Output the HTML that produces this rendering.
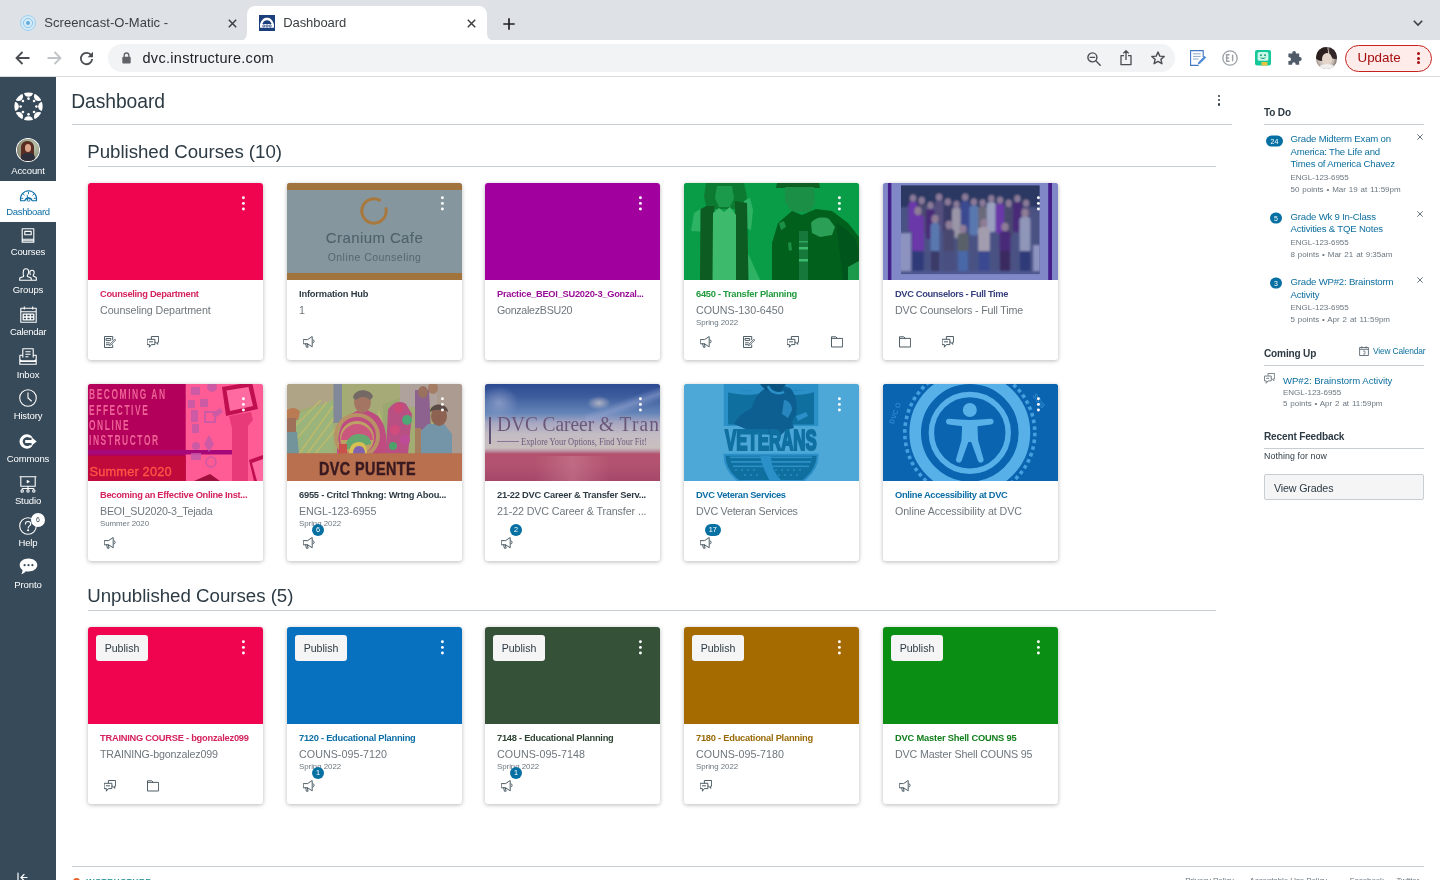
<!DOCTYPE html>
<html lang="en">
<head>
<meta charset="utf-8">
<title>Dashboard</title>
<style>
*{box-sizing:border-box;margin:0;padding:0}
html,body{width:1440px;height:880px;overflow:hidden;background:#fff;font-family:"Liberation Sans",sans-serif;color:#2d3b45}
.abs{position:absolute}
svg{display:block;overflow:visible}
#tabbar{position:absolute;left:0;top:0;width:1440px;height:40px;background:#dee1e6}
#toolbar{position:absolute;left:0;top:40px;width:1440px;height:37px;background:#fff;border-bottom:1px solid #dadce0}

.tabtxt{position:absolute;top:14.800px;font-size:13px;color:#3c4043;white-space:nowrap}
#tt1{letter-spacing:.055px}#tt2{letter-spacing:-.07px}
#omni{position:absolute;left:108px;top:44px;width:1067px;height:28px;border-radius:14px;background:#f1f3f4}
#url{position:absolute;left:142.500px;top:50px;font-size:14.500px;color:#202124;white-space:nowrap;letter-spacing:.3px}
#side{position:absolute;left:0;top:77px;width:56px;height:803px;background:#374a59}
.nav{position:absolute;left:0;width:56px;text-align:center;font-size:9.500px;color:#fff;white-space:nowrap;letter-spacing:-.12px}
#nav-active{position:absolute;left:0;top:181px;width:56px;height:41px;background:#fff}
h1.t{position:absolute;left:71.200px;top:90.700px;font-size:19.300px;letter-spacing:-.06px;font-weight:400;color:#2d3b45;white-space:nowrap}
.hr{position:absolute;height:1px;background:#c7cdd1}
h2.s{position:absolute;left:87.200px;letter-spacing:-.02px;font-size:18.700px;font-weight:400;color:#2d3b45;white-space:nowrap}
.card{position:absolute;width:175px;height:177px;background:#fff;border-radius:3px;box-shadow:0 1px 4px rgba(0,0,0,.28);overflow:hidden}
.hero{position:absolute;left:0;top:0;width:175px;height:97px;overflow:hidden}
.ct{position:absolute;left:12px;top:106px;width:152px;font-size:9.300px;letter-spacing:-.3px;font-weight:700;white-space:nowrap;overflow:hidden;text-overflow:ellipsis}
.cs{position:absolute;left:12px;top:121px;width:152px;font-size:10.700px;letter-spacing:-.08px;color:#6f777d;white-space:nowrap;overflow:hidden;text-overflow:ellipsis}
.cterm{position:absolute;left:12px;top:134.600px;font-size:7.900px;letter-spacing:-.1px;color:#6b7780;white-space:nowrap}
.kebab{position:absolute;left:153px;top:14px;width:4px;height:14px}
.kebab i{display:block;width:2.800px;height:2.800px;border-radius:50%;background:#fff;margin:0 0 2.800px .3px}
.pub{position:absolute;left:8px;top:8px;width:52px;height:26px;background:#f5f5f5;border-radius:3px;font-size:10.6px;color:#2d3b45;text-align:center;line-height:26px}
.ic{position:absolute;top:153px;width:12px;height:12px;color:#46555f}
.ic svg{width:12px;height:12px;fill:none;stroke:currentColor;stroke-width:.95;stroke-linejoin:round;stroke-linecap:round}
.badge{position:absolute;height:12.200px;min-width:11px;border-radius:6.100px;background:#0770a3;color:#fff;font-size:7.300px;line-height:12.200px;text-align:center;padding:0 2.5px}
#wrap{position:absolute;left:0;top:0;width:1440px;height:880px;will-change:transform}
</style>
</head>
<body>
<div id="wrap">
<svg width="0" height="0" style="position:absolute">
<defs>
<symbol id="i-ann" viewBox="0 0 12 12"><path d="M.6 3.600h4l4.600-3.100v10.300L4.600 7.800h-4zM10.100 3.700c1.500.2 1.500 3.100 0 3.300M2.700 7.900l.7 3.300h1.700l-.7-3.300"/></symbol>
<symbol id="i-asg" viewBox="0 0 12 12"><path d="M8.700 3.800V.5H.5v11h8.200V9M2.400 2.500h4.400v1.900H2.400zM2.400 6.800h3M2.400 8.700h2.400"/><path d="M11.500 4.300l-4.700 4.800-1.300.5.400-1.400 4.700-4.700z" stroke-width=".8"/></symbol>
<symbol id="i-dis" viewBox="0 0 12 12"><path d="M4.400 3V.5h7.200v5.600h-.9v2.300L8.700 6.100H8M.5 3.300h7.400v5.300H4.300l-1.900 2.600V8.600H.5zM2.400 5.800h3.200"/></symbol>
<symbol id="i-fol" viewBox="0 0 12 12"><path d="M.5 10.600V.8h4.300l1.600 1.600h5.200v8.200zM.5 2.400h5.900"/></symbol>
</defs>
</svg>
<div id="tabbar"></div>
<svg class="abs" style="left:239px;top:5.500px" width="257" height="35" viewBox="0 0 257 35"><path d="M0 35c5 0 8-3 8-8V9c0-5 3-9 8-9h224c5 0 8 4 8 9v18c0 5 3 8 9 8z" fill="#fff"/></svg>
<svg class="abs" style="left:20px;top:15px" width="16" height="16" viewBox="0 0 16 16"><circle cx="8" cy="8" r="7.500" fill="#d3eaf8" stroke="#9fd0ee" stroke-width="1"/><circle cx="8" cy="8" r="4.600" fill="none" stroke="#8cc5e8" stroke-width="1"/><circle cx="8" cy="8" r="1.900" fill="#5ea9d6"/></svg>
<div class="tabtxt" id="tt1" style="left:44.300px">Screencast-O-Matic -</div>
<svg class="abs" style="left:228px;top:19px" width="9" height="9" viewBox="0 0 9 9" fill="none" stroke="#3c4043" stroke-width="1.500"><path d="M.8.8l7.400 7.400M8.200.8L.8 8.200"/></svg>
<svg class="abs" style="left:259px;top:15px" width="16" height="16" viewBox="0 0 16 16"><rect width="16" height="16" fill="#1b3e7c"/><path d="M1 9.500C2.500 4.500 5 2.800 8 2.800s5.500 1.700 7 6.700H12.800C12 6.800 10.200 5.300 8 5.300S4 6.800 3.200 9.500z" fill="#fff"/><rect x="1" y="9" width="14" height="3.800" rx=".5" fill="#fff"/><g fill="none" stroke="#1b3e7c" stroke-width=".8"><circle cx="4.800" cy="10.900" r="1.100"/><circle cx="8" cy="10.900" r="1.100"/><circle cx="11.200" cy="10.900" r="1.100"/></g></svg>
<div class="tabtxt" id="tt2" style="left:283.200px">Dashboard</div>
<svg class="abs" style="left:466.500px;top:19px" width="9" height="9" viewBox="0 0 9 9" fill="none" stroke="#3c4043" stroke-width="1.500"><path d="M.8.8l7.400 7.400M8.200.8L.8 8.200"/></svg>
<svg class="abs" style="left:503px;top:17.500px" width="12" height="12" viewBox="0 0 12 12" fill="none" stroke="#202124" stroke-width="1.700"><path d="M6 .3v11.400M.3 6h11.400"/></svg>
<svg class="abs" style="left:1413px;top:19.500px" width="10" height="6" viewBox="0 0 10 6" fill="none" stroke="#3c4043" stroke-width="1.600"><path d="M.8.8L5 5 9.200.8"/></svg>
<div id="toolbar"></div>
<svg class="abs" style="left:14.500px;top:51px" width="15" height="14" viewBox="0 0 15 14" fill="none" stroke="#4a4d51" stroke-width="1.800"><path d="M14.500 7H2M7.500 1L1.500 7l6 6"/></svg>
<svg class="abs" style="left:46.500px;top:51px" width="15" height="14" viewBox="0 0 15 14" fill="none" stroke="#c0c3c7" stroke-width="1.800"><path d="M.5 7H13M7.500 1l6 6-6 6"/></svg>
<svg class="abs" style="left:79px;top:50.500px" width="15" height="15" viewBox="0 0 15 15"><path d="M12.300 4.400A5.700 5.700 0 1 0 13.200 8" fill="none" stroke="#4a4d51" stroke-width="1.800"/><path d="M14 .8v5.400H8.600z" fill="#4a4d51"/></svg>
<div id="omni"></div>
<svg class="abs" style="left:121.500px;top:52px" width="9" height="12" viewBox="0 0 9 12"><path d="M2.200 5V3.300a2.300 2.300 0 0 1 4.600 0V5" fill="none" stroke="#5f6368" stroke-width="1.300"/><rect x=".3" y="4.800" width="8.400" height="6.600" rx="1" fill="#5f6368"/></svg>
<div id="url">dvc.instructure.com</div>
<svg class="abs" style="left:1087px;top:51.500px" width="14" height="14" viewBox="0 0 14 14" fill="none" stroke="#4a4d51" stroke-width="1.400"><circle cx="5.400" cy="5.400" r="4.500"/><path d="M8.800 8.800l4.400 4.400M3.200 5.400h4.400" stroke-linecap="round"/></svg>
<svg class="abs" style="left:1120px;top:50px" width="12" height="16" viewBox="0 0 12 16" fill="none" stroke="#4a4d51" stroke-width="1.300" stroke-linejoin="round"><path d="M4 5.700H1v9h10v-9H8M6 10V1M3.300 3.400L6 .8l2.700 2.600"/></svg>
<svg class="abs" style="left:1151px;top:51px" width="14" height="14" viewBox="0 0 14 14" fill="none" stroke="#4a4d51" stroke-width="1.400" stroke-linejoin="round"><path d="M7 1l1.800 4.100 4.400.4-3.300 2.900 1 4.300L7 10.400l-3.900 2.300 1-4.300L.8 5.500l4.400-.4z"/></svg>
<svg class="abs" style="left:1190px;top:50px" width="17" height="16" viewBox="0 0 17 16" fill="none" stroke="#3f78c7" stroke-width="1.100"><path d="M13.200 7V.6H.6v14.800h8"/><path d="M3 3.800h7.600M3 6.400h7.600M3 9h5.500" stroke="#7f9cc0" stroke-width=".9"/><path d="M15.800 7.500l-5.600 5.600-2 .8.800-2 5.600-5.600z" fill="#4d8de0" stroke="#3f78c7" stroke-width=".8"/></svg>
<svg class="abs" style="left:1222px;top:50px" width="16" height="16" viewBox="0 0 16 16" fill="none" stroke="#9aa0a6" stroke-width="1.300"><circle cx="8" cy="8" r="7.200"/><path d="M7.600 4.800H4.600v6.400h3M4.600 8h2.400M10.600 4.800v6.400" stroke-width="1.400"/></svg>
<svg class="abs" style="left:1254.500px;top:50px" width="16" height="16" viewBox="0 0 16 16"><rect width="16" height="15.500" rx="2" fill="#16c79a"/><rect x="2.600" y="2" width="10.800" height="8.800" rx="1.600" fill="#c9f7e8"/><circle cx="6" cy="5.200" r=".9" fill="#0e8f6e"/><circle cx="10" cy="5.200" r=".9" fill="#0e8f6e"/><path d="M5.600 7.400c.8 1.400 4 1.400 4.800 0" fill="none" stroke="#0e8f6e" stroke-width="1"/><rect x="6.500" y="12" width="6" height="3.500" fill="#e8c23a"/></svg>
<svg class="abs" style="left:1286px;top:50px" width="16" height="16" viewBox="0 0 16 16"><path d="M6.300 2.800a1.800 1.800 0 0 1 3.600 0v.8h3.300v3.500h.6a1.900 1.900 0 0 1 0 3.800h-.6v3.800H9.600v-.7a1.700 1.700 0 0 0-3.400 0v.7H2.400v-3.600h.7a1.900 1.900 0 0 0 0-3.800h-.7V3.600h3.900z" fill="#4f5b69"/></svg>
<div class="abs" style="left:1315.500px;top:47px;width:21.500px;height:21.500px;border-radius:50%;overflow:hidden;background:#d8d2cc">
 <div class="abs" style="left:0;top:0;width:22px;height:22px;background:radial-gradient(circle at 45% 55%,#e9e0d8 0,#c9beb5 45%,#3a2d2a 80%)"></div>
 <div class="abs" style="left:-2px;top:-3px;width:14px;height:17px;border-radius:50%;background:#2b201e"></div>
 <div class="abs" style="left:13px;top:-4px;width:12px;height:16px;border-radius:50%;background:#33272a"></div>
 <div class="abs" style="left:6px;top:6px;width:10px;height:12px;border-radius:50%;background:#e5d6cb"></div>
 <div class="abs" style="left:3px;top:17px;width:16px;height:7px;border-radius:50% 50% 0 0;background:#f1efee"></div>
</div>
<div class="abs" style="left:1344.500px;top:44.500px;width:87.500px;height:27px;border-radius:13.500px;background:#fdecea;border:1px solid #c5221f"></div>
<div class="abs" id="upd" style="left:1357.500px;top:49.500px;font-size:13.400px;color:#a50e0e;white-space:nowrap">Update</div>
<div class="abs" style="left:1416.800px;top:52.300px;width:3px"><i style="display:block;width:3px;height:3px;border-radius:50%;background:#a50e0e;margin-bottom:1.600px"></i><i style="display:block;width:3px;height:3px;border-radius:50%;background:#a50e0e;margin-bottom:1.600px"></i><i style="display:block;width:3px;height:3px;border-radius:50%;background:#a50e0e"></i></div>
<div id="side"></div>
<div id="nav-active"></div>
<svg class="abs" style="left:13.500px;top:91.700px" width="29" height="29" viewBox="0 0 28 28"><defs><clipPath id="lc"><circle cx="14" cy="14" r="13.6"/></clipPath></defs><g clip-path="url(#lc)" fill="#fff"><circle cx="14.00" cy="0.20" r="4.500"/><circle cx="14.00" cy="6.40" r="1.250"/><circle cx="23.76" cy="4.24" r="4.500"/><circle cx="19.37" cy="8.63" r="1.250"/><circle cx="27.80" cy="14.00" r="4.500"/><circle cx="21.60" cy="14.00" r="1.250"/><circle cx="23.76" cy="23.76" r="4.500"/><circle cx="19.37" cy="19.37" r="1.250"/><circle cx="14.00" cy="27.80" r="4.500"/><circle cx="14.00" cy="21.60" r="1.250"/><circle cx="4.24" cy="23.76" r="4.500"/><circle cx="8.63" cy="19.37" r="1.250"/><circle cx="0.20" cy="14.00" r="4.500"/><circle cx="6.40" cy="14.00" r="1.250"/><circle cx="4.24" cy="4.24" r="4.500"/><circle cx="8.63" cy="8.63" r="1.250"/></g></svg>
<div class="abs" style="left:16px;top:138px;width:24px;height:24px;border-radius:50%;background:#fff"></div>
<div class="abs" style="left:17px;top:139px;width:22px;height:22px;border-radius:50%;overflow:hidden;background:#8f8a80">
 <div class="abs" style="left:0;top:0;width:22px;height:22px;background:radial-gradient(circle at 70% 30%,#b9c7b0 0,#9fa890 40%,#7d7466 100%)"></div>
 <div class="abs" style="left:4px;top:2px;width:13px;height:22px;border-radius:6px 6px 2px 2px;background:#5a2d22"></div>
 <div class="abs" style="left:7.5px;top:4.5px;width:6.5px;height:8px;border-radius:50%;background:#d9a58c"></div>
 <div class="abs" style="left:4px;top:14px;width:14px;height:9px;border-radius:5px 5px 0 0;background:#2c2f3a"></div>
</div>
<div class="nav" style="top:165px">Account</div>
<svg class="abs" style="left:18.5px;top:190px" width="19" height="12" viewBox="0 0 19 12" fill="none" stroke="#0b6ea6" stroke-width="1.1" stroke-linecap="round" stroke-linejoin="round"><path d="M1.6 10.8A8.3 8.3 0 0 1 9.5 .8a8.3 8.3 0 0 1 7.900 10H13.200a3.800 3.800 0 0 0-7.400 0z"/><path d="M9.500 2.300v1.500M4.300 4.200l1 1M14.700 4.200l-1 1M2.600 8.300h1.300M16.400 8.300h-1.300M8.200 5.200l.6 4.200M8 9.800a1.500 1.500 0 1 0 3 0 1.500 1.500 0 0 0-3 0" stroke-width=".9"/></svg>
<div class="nav" style="top:206px;color:#0b6ea6;letter-spacing:-.35px">Dashboard</div>
<svg class="abs" style="left:21px;top:227.500px" width="14" height="15" viewBox="0 0 14 15" fill="none" stroke="#fff" stroke-width="1.1" stroke-linejoin="round"><path d="M1.200 .7h11.600v10.600H1.200zM1.200 11.300v3h11.600v-3M1.200 12.800h11.600M3.800 3.400h6.400v3.400H3.800z"/></svg>
<div class="nav" style="top:246px">Courses</div>
<svg class="abs" style="left:18.500px;top:267.500px" width="19" height="13" viewBox="0 0 19 13" fill="none" stroke="#fff" stroke-width="1.100" stroke-linejoin="round"><path d="M7 .7c1.700 0 2.700 1.300 2.700 3s-.6 2.900-1.400 3.600v1.200l3.900 1.600v2.200H.7V10.100l3.900-1.600V7.300C3.800 6.600 4.300 5.400 4.300 3.700s1-3 2.700-3z"/><path d="M11.600 6.800c-.5-.5-.8-1.300-.8-2.300 0-1.400.9-2.300 2.200-2.300s2.200.9 2.200 2.300c0 1.200-.4 2-1 2.600v1l3.100 1.300v2.900h-5"/></svg>
<div class="nav" style="top:284px">Groups</div>
<svg class="abs" style="left:19.700px;top:306px" width="17" height="17" viewBox="0 0 17 17" fill="none" stroke="#fff" stroke-width="1.100" stroke-linejoin="round"><path d="M.8 2.200h15.400v14H.8zM.8 5.800h15.400M4.300 .5v3M12.700 .5v3"/><path d="M3.200 8.200h10.600v5.600H3.200zM3.200 11h10.600M6.700 8.200v5.600M10.300 8.200v5.600" stroke-width="1.300"/></svg>
<div class="nav" style="top:326px;letter-spacing:-.3px">Calendar</div>
<svg class="abs" style="left:19.200px;top:348px" width="18" height="17" viewBox="0 0 18 17" fill="none" stroke="#fff" stroke-width="1.100" stroke-linejoin="round"><path d="M3.800 9.500V.7h10.400v8.800M.8 7.200h3M14.200 7.200h3v9H.8v-9M.8 13.400h16.400M.8 7.200v3.200c0 1.500 1 2.500 2.500 2.500h11.400c1.500 0 2.500-1 2.500-2.500V7.200M6.400 3.700h5.200M6.400 6.200h5.200M6.400 8.800h3"/></svg>
<div class="nav" style="top:369px">Inbox</div>
<svg class="abs" style="left:19px;top:389px" width="18" height="18" viewBox="0 0 18 18" fill="none" stroke="#fff" stroke-width="1.100" stroke-linecap="round"><circle cx="9" cy="9" r="8.300"/><path d="M9 3.800V9l3.400 3"/></svg>
<div class="nav" style="top:410px">History</div>
<svg class="abs" style="left:19px;top:433.500px" width="18" height="15" viewBox="0 0 18 15" fill="#fff"><path d="M7.700 .3c2.700 0 4.900 1.400 6 3.500h-3.100a4.400 4.400 0 1 0 0 7.400h3.100c-1.100 2.100-3.300 3.500-6 3.500A7.200 7.200 0 0 1 .5 7.500 7.200 7.200 0 0 1 7.700 .3z"/><path d="M6.200 6h6.300V3.300l5.200 4.200-5.200 4.200V9H6.200z"/></svg>
<div class="nav" style="top:452.500px">Commons</div>
<svg class="abs" style="left:19px;top:475.500px" width="18" height="17" viewBox="0 0 18 17" fill="none" stroke="#fff" stroke-width="1.100" stroke-linejoin="round"><path d="M1.800 .7h14.400v9.600H1.800zM.5 .7h17M9 10.300v2.200M3.200 12.500h11.600M3.200 12.500v1.300M9 12.500v1.300M14.800 12.500v1.300"/><circle cx="3.200" cy="15" r="1.200"/><circle cx="9" cy="15" r="1.200"/><circle cx="14.800" cy="15" r="1.200"/><path d="M8 4.200l2.600 1.400L8 7z" fill="#fff" stroke-width=".6"/></svg>
<div class="nav" style="top:495px">Studio</div>
<svg class="abs" style="left:19px;top:516.500px" width="18" height="18" viewBox="0 0 18 18" fill="none" stroke="#fff" stroke-width="1.100" stroke-linecap="round"><circle cx="9" cy="9" r="8.300"/><path d="M6.400 7.100c0-1.600 1.200-2.600 2.700-2.600s2.600 1 2.600 2.400c0 1.900-2.500 2-2.500 4"/><circle cx="9.100" cy="13.300" r=".5" fill="#fff"/></svg>
<div class="abs" style="left:31px;top:512.500px;width:14px;height:14px;border-radius:50%;background:#fff;color:#2d3b45;font-size:7px;line-height:14px;text-align:center">6</div>
<div class="nav" style="top:537.300px">Help</div>
<svg class="abs" style="left:18.500px;top:558px" width="19" height="17" viewBox="0 0 19 17" fill="#fff"><path d="M9.500 .6c4.900 0 8.800 2.900 8.800 6.500s-3.900 6.500-8.800 6.500c-.9 0-1.800-.1-2.600-.3-1.100 1.400-2.700 2.500-4.700 2.900.9-1.200 1.400-2.600 1.300-4.100C1.700 10.900.7 9.100.7 7.100.7 3.500 4.600.6 9.500.6z"/><g fill="#374a59"><circle cx="5.600" cy="7.200" r="1.100"/><circle cx="9.500" cy="7.200" r="1.100"/><circle cx="13.400" cy="7.200" r="1.100"/></g></svg>
<div class="nav" style="top:578.800px">Pronto</div>
<svg class="abs" style="left:17px;top:873px" width="11" height="9" viewBox="0 0 11 9" fill="none" stroke="#fff" stroke-width="1.200" stroke-linecap="round"><path d="M1 0v9M10 4.500H4M7 1.500l-3 3 3 3"/></svg>
<h1 class="t">Dashboard</h1>
<div class="hr" style="left:72px;top:124px;width:1160px"></div>
<h2 class="s" style="top:140.600px">Published Courses (10)</h2>
<div class="hr" style="left:88px;top:166px;width:1128px"></div>
<h2 class="s" style="top:584.600px">Unpublished Courses (5)</h2>
<div class="hr" style="left:88px;top:610px;width:1128px"></div>
<div class="hr" style="left:72px;top:866px;width:1352px"></div>
<div class="abs" style="left:72.500px;top:877.800px;width:7px;height:7px;border-radius:50%;background:#e8632a"></div>
<div class="abs" style="left:86px;top:877.700px;font-size:8px;line-height:1;font-weight:700;color:#1f8f8f;letter-spacing:.75px;white-space:nowrap">INSTRUCTURE</div>
<div class="abs" style="left:1185.300px;top:876.700px;font-size:8px;line-height:1;color:#6b7780;white-space:nowrap;letter-spacing:-.1px">Privacy Policy</div>
<div class="abs" style="left:1249.500px;top:876.700px;font-size:8px;line-height:1;color:#6b7780;white-space:nowrap;letter-spacing:-.1px">Acceptable Use Policy</div>
<div class="abs" style="left:1349.700px;top:876.700px;font-size:8px;line-height:1;color:#6b7780;white-space:nowrap;letter-spacing:-.1px">Facebook</div>
<div class="abs" style="left:1396.400px;top:876.700px;font-size:8px;line-height:1;color:#6b7780;white-space:nowrap;letter-spacing:-.1px">Twitter</div>
<div class="card" style="left:88px;top:183px">
<div class="hero" style="background:#f0044f"></div>
<svg class="abs" style="left:152.600px;top:13.300px" width="5" height="15" viewBox="0 0 5 15" fill="#fff"><circle cx="2.400" cy="1.700" r="1.450"/><circle cx="2.400" cy="7.400" r="1.450"/><circle cx="2.400" cy="13" r="1.450"/></svg>
<div class="ct" style="color:#d4225c;letter-spacing:-0.298px">Counseling Department</div>
<div class="cs" style="letter-spacing:-0.076px">Counseling Department</div>
<div class="ic" style="left:16px"><svg><use href="#i-asg"/></svg></div>
<div class="ic" style="left:59px"><svg><use href="#i-dis"/></svg></div>
</div>
<div class="card" style="left:287px;top:183px">
<div class="hero" style="background:#85969e">
<div class="abs" style="left:0;top:0;width:175px;height:7px;background:#a0743c"></div>
<div class="abs" style="left:0;top:89.500px;width:175px;height:7.500px;background:#a0743c"></div>
<svg class="abs" style="left:72px;top:13.300px" width="30" height="30" viewBox="0 0 30 30"><path d="M20.600 4.100A12.200 12.200 0 1 0 27 12.600" fill="none" stroke="#a8783c" stroke-width="3" stroke-linecap="round"/></svg>
<div class="abs" id="cc1" style="left:0;top:46.500px;width:175px;text-align:center;font-size:15px;line-height:1;color:#4f626a;-webkit-text-stroke:.1px #4f626a;letter-spacing:.4px">Cranium Cafe</div>
<div class="abs" id="cc2" style="left:0;top:68.500px;width:175px;text-align:center;font-size:10.500px;line-height:1;color:#55676f;letter-spacing:.46px">Online Counseling</div>
</div>
<svg class="abs" style="left:152.600px;top:13.300px" width="5" height="15" viewBox="0 0 5 15" fill="#fff"><circle cx="2.400" cy="1.700" r="1.450"/><circle cx="2.400" cy="7.400" r="1.450"/><circle cx="2.400" cy="13" r="1.450"/></svg>
<div class="ct" style="color:#2d3b45;letter-spacing:-0.173px">Information Hub</div>
<div class="cs" style="">1</div>
<div class="ic" style="left:16px"><svg><use href="#i-ann"/></svg></div>
</div>
<div class="card" style="left:485px;top:183px">
<div class="hero" style="background:#a2009e"></div>
<svg class="abs" style="left:152.600px;top:13.300px" width="5" height="15" viewBox="0 0 5 15" fill="#fff"><circle cx="2.400" cy="1.700" r="1.450"/><circle cx="2.400" cy="7.400" r="1.450"/><circle cx="2.400" cy="13" r="1.450"/></svg>
<div class="ct" style="color:#9a0f97;letter-spacing:-0.263px">Practice_BEOI_SU2020-3_Gonzal...</div>
<div class="cs" style="letter-spacing:-0.294px">GonzalezBSU20</div>
</div>
<div class="card" style="left:684px;top:183px">
<div class="hero" style="background:#099d47">
<svg class="abs" style="left:0;top:0" width="175" height="97" viewBox="0 0 175 97">
<defs><filter id="b1" x="-5%" y="-5%" width="110%" height="110%"><feGaussianBlur stdDeviation=".7"/></filter></defs>
<rect width="175" height="97" fill="#099d47"/>
<g filter="url(#b1)">
<path d="M22 0h38l3 14-3 12H23l-3-12z" fill="#0c7a33"/>
<path d="M33 3h15l2 12-4 9h-11l-4-9z" fill="#1f9a4c"/>
<path d="M7 48l3-18 8-5h8v24z" fill="#2fb365"/>
<path d="M59 44l1-26 6-3 3 12-2 20z" fill="#2fb365"/>
<path d="M62 66l14 31H60z" fill="#2fb365"/>
<path d="M16.500 26l6-3h8L29 97H16z" fill="#0b5c22"/>
<path d="M51 18l12 2 1.500 77H52z" fill="#0b5c22"/>
<path d="M29 30l6-5 5 4 6-5 6 8V97H28.500z" fill="#3dba6c"/>
<path d="M93 0h42l1 5H92z" fill="#0a5e24"/>
<path d="M101 4h29l1 16-5 9h-18l-7-10z" fill="#1c8f46"/>
<path d="M88 97V60l6-20 14-12 10 4 14-6 16 2 16 12 11 14v43z" fill="#06601f"/>
<path d="M152 40l10 6 9 10 4 10v31h-16z" fill="#05551a"/>
<path d="M127 40c3-5 12-7 18-4l6 8-3 8-12 2-8-4z" fill="#2a9f55"/>
<path d="M115 48h9v49h-9z" fill="#12793a"/>
<rect x="115" y="64" width="9" height="2.500" fill="#3dba6c"/><rect x="115" y="76" width="9" height="2.500" fill="#3dba6c"/><rect x="115" y="58" width="9" height="1.500" fill="#2fa75e"/>
<path d="M95 40l5-2 2 6-5 3zM104 60l3-1 1 8-3 1z" fill="#1c8f46"/>
<path d="M164 84l11-6v19h-11z" fill="#1f9a4c"/>
</g>
</svg></div>
<svg class="abs" style="left:152.600px;top:13.300px" width="5" height="15" viewBox="0 0 5 15" fill="#fff"><circle cx="2.400" cy="1.700" r="1.450"/><circle cx="2.400" cy="7.400" r="1.450"/><circle cx="2.400" cy="13" r="1.450"/></svg>
<div class="ct" style="color:#1f9a3c;letter-spacing:-0.270px">6450 - Transfer Planning</div>
<div class="cs" style="letter-spacing:0.027px">COUNS-130-6450</div>
<div class="cterm" style="letter-spacing:-0.042px">Spring 2022</div>
<div class="ic" style="left:16px"><svg><use href="#i-ann"/></svg></div>
<div class="ic" style="left:59px"><svg><use href="#i-asg"/></svg></div>
<div class="ic" style="left:103px"><svg><use href="#i-dis"/></svg></div>
<div class="ic" style="left:147px"><svg><use href="#i-fol"/></svg></div>
</div>
<div class="card" style="left:883px;top:183px">
<div class="hero" style="background:#8088c8">
<svg class="abs" style="left:0;top:0" width="175" height="97" viewBox="0 0 175 97">
<defs><filter id="b2" x="-5%" y="-5%" width="110%" height="110%"><feGaussianBlur stdDeviation=".9"/></filter><clipPath id="c2"><rect x="18" y="2.600" width="138.500" height="88.500"/></clipPath></defs>
<rect width="175" height="97" fill="#8088c8"/>
<rect x="4.900" y="0" width="3.500" height="97" fill="#45208a"/><rect x="165.200" y="0" width="3.800" height="97" fill="#45208a"/>
<rect x="18" y="2.600" width="138.500" height="88.500" fill="#4a5284"/>
<g clip-path="url(#c2)"><g filter="url(#b2)">
<rect x="14" y="0" width="146" height="24" fill="#2c3862"/>
<rect x="14" y="50" width="14" height="45" fill="#8d92bf"/><rect x="150" y="62" width="10" height="32" fill="#8d92bf"/>
<ellipse cx="30.0" cy="15.3" rx="3.200" ry="3.800" fill="#8a7a98"/><rect x="25.5" y="18.8" width="9" height="30" rx="3" fill="#6a38a8"/><ellipse cx="38.7" cy="17.6" rx="3.200" ry="3.800" fill="#8a7a98"/><rect x="34.2" y="21.1" width="9" height="30" rx="3" fill="#4a4a70"/><ellipse cx="47.4" cy="22.6" rx="3.200" ry="3.800" fill="#8a7a98"/><rect x="42.9" y="26.1" width="9" height="30" rx="3" fill="#4a2a78"/><ellipse cx="56.1" cy="14.3" rx="3.200" ry="3.800" fill="#8a7a98"/><rect x="51.6" y="17.8" width="9" height="30" rx="3" fill="#54507e"/><ellipse cx="64.8" cy="19.1" rx="3.200" ry="3.800" fill="#8a7a98"/><rect x="60.3" y="22.6" width="9" height="30" rx="3" fill="#3a3a68"/><ellipse cx="73.5" cy="21.5" rx="3.200" ry="3.800" fill="#8a7a98"/><rect x="69.0" y="25.0" width="9" height="30" rx="3" fill="#9a96a8"/><ellipse cx="82.2" cy="14.2" rx="3.200" ry="3.800" fill="#8a7a98"/><rect x="77.7" y="17.7" width="9" height="30" rx="3" fill="#3a4890"/><ellipse cx="90.9" cy="19.0" rx="3.200" ry="3.800" fill="#8a7a98"/><rect x="86.4" y="22.5" width="9" height="30" rx="3" fill="#5a78b0"/><ellipse cx="99.6" cy="20.1" rx="3.200" ry="3.800" fill="#8a7a98"/><rect x="95.1" y="23.6" width="9" height="30" rx="3" fill="#6a6a7a"/><ellipse cx="108.3" cy="15.7" rx="3.200" ry="3.800" fill="#8a7a98"/><rect x="103.8" y="19.2" width="9" height="30" rx="3" fill="#9aa0c0"/><ellipse cx="117.0" cy="17.3" rx="3.200" ry="3.800" fill="#8a7a98"/><rect x="112.5" y="20.8" width="9" height="30" rx="3" fill="#6a38a8"/><ellipse cx="125.7" cy="20.4" rx="3.200" ry="3.800" fill="#8a7a98"/><rect x="121.2" y="23.9" width="9" height="30" rx="3" fill="#4a4a70"/><ellipse cx="134.4" cy="15.7" rx="3.200" ry="3.800" fill="#8a7a98"/><rect x="129.9" y="19.2" width="9" height="30" rx="3" fill="#4a2a78"/><ellipse cx="143.1" cy="20.3" rx="3.200" ry="3.800" fill="#8a7a98"/><rect x="138.6" y="23.8" width="9" height="30" rx="3" fill="#54507e"/><ellipse cx="35" cy="28" rx="3.600" ry="4.200" fill="#8f7d96"/><rect x="29.0" y="32" width="12" height="38" rx="3.500" fill="#6a38a8"/><rect x="29.5" y="68" width="11" height="24" fill="#2d3a78"/><ellipse cx="52" cy="36" rx="3.600" ry="4.200" fill="#8f7d96"/><rect x="47.5" y="40" width="9" height="30" rx="3.500" fill="#5a78b0"/><rect x="48.0" y="68" width="8" height="24" fill="#3a3a68"/><ellipse cx="66" cy="42" rx="3.600" ry="4.200" fill="#8f7d96"/><rect x="60.5" y="46" width="11" height="24" rx="3.500" fill="#4a4a70"/><rect x="61.0" y="68" width="10" height="24" fill="#4a5080"/><ellipse cx="80" cy="46" rx="3.600" ry="4.200" fill="#8f7d96"/><rect x="74.5" y="50" width="11" height="20" rx="3.500" fill="#5a6068"/><rect x="75.0" y="68" width="10" height="24" fill="#4a68a8"/><ellipse cx="101" cy="40" rx="3.600" ry="4.200" fill="#8f7d96"/><rect x="95.0" y="44" width="12" height="26" rx="3.500" fill="#a39cae"/><rect x="95.5" y="68" width="11" height="24" fill="#3a4a90"/><ellipse cx="122" cy="44" rx="3.600" ry="4.200" fill="#8f7d96"/><rect x="116.5" y="48" width="11" height="22" rx="3.500" fill="#4a2a78"/><rect x="117.0" y="68" width="10" height="24" fill="#3a2a60"/><ellipse cx="142" cy="30" rx="3.600" ry="4.200" fill="#8f7d96"/><rect x="136.5" y="34" width="11" height="36" rx="3.500" fill="#8f96b8"/><rect x="137.0" y="68" width="10" height="24" fill="#2d3a78"/>
<rect x="14" y="88" width="146" height="6" fill="#505890"/>
</g></g>
</svg></div>
<svg class="abs" style="left:152.600px;top:13.300px" width="5" height="15" viewBox="0 0 5 15" fill="#fff"><circle cx="2.400" cy="1.700" r="1.450"/><circle cx="2.400" cy="7.400" r="1.450"/><circle cx="2.400" cy="13" r="1.450"/></svg>
<div class="ct" style="color:#37407f;letter-spacing:-0.356px">DVC Counselors - Full Time</div>
<div class="cs" style="letter-spacing:-0.171px">DVC Counselors - Full Time</div>
<div class="ic" style="left:16px"><svg><use href="#i-fol"/></svg></div>
<div class="ic" style="left:59px"><svg><use href="#i-dis"/></svg></div>
</div>
<div class="card" style="left:88px;top:384px">
<div class="hero" style="background:#ff5c96">
<svg class="abs" style="left:0;top:0" width="175" height="97" viewBox="0 0 175 97">
<rect width="175" height="97" fill="#ff5c96"/>
<rect x="0" y="0" width="97.700" height="97" fill="#b3005a"/>
<rect x="0" y="72" width="97.700" height="25" fill="#c00a3c"/>
<rect x="0" y="66" width="151" height="4.500" fill="#a6087a"/>
<g fill="#c45aa8" opacity=".85"><rect x="103" y="3" width="9" height="8"/><circle cx="124" cy="3" r="5"/><rect x="100" y="16" width="7" height="8"/><rect x="112" y="15" width="8" height="8"/><rect x="103" y="26" width="7" height="12"/><path d="M116 27h12v12h-12zM118 29v8h8v-8z"/><path d="M124 30l8-6 3 4-8 6z"/><rect x="104" y="40" width="7" height="9"/><path d="M116 60l5-9 5 9-5 8z"/><circle cx="108" cy="62" r="4"/><rect x="103" y="69" width="10" height="7"/><circle cx="123" cy="78" r="5" fill="none" stroke="#c45aa8" stroke-width="1.500"/></g>
<path d="M134 3l30-5 6 27-32 7z" fill="#bf0f50"/><path d="M138.500 6.500l22-3.500 4.500 19-23 5z" fill="#ff6aa0"/>
<path d="M141 32l22-4 2 8-5 6v55h-16V44z" fill="#e83a78"/>
<path d="M161 76l14-5v26h-9z" fill="#bf0f50"/><path d="M164 79l11-4v22h-6z" fill="#ff6aa0"/>
<path d="M106 97l16-7 10 7z" fill="#a0103c"/>
</svg>
<div class="abs" id="be1" style="left:1.300px;top:3.300px;font-size:14px;line-height:15.300px;font-weight:700;color:#ee6297;letter-spacing:2.600px;transform:scaleX(.601);transform-origin:0 0;white-space:nowrap">BECOMING AN<br>EFFECTIVE<br>ONLINE<br>INSTRUCTOR</div>
<div class="abs" id="be2" style="left:1.500px;top:81.700px;font-size:12.800px;line-height:1;font-weight:400;-webkit-text-stroke:.35px #ff5545;color:#ff5545;white-space:nowrap;letter-spacing:.17px">Summer 2020</div>
</div>
<svg class="abs" style="left:152.600px;top:13.300px" width="5" height="15" viewBox="0 0 5 15" fill="#fff"><circle cx="2.400" cy="1.700" r="1.450"/><circle cx="2.400" cy="7.400" r="1.450"/><circle cx="2.400" cy="13" r="1.450"/></svg>
<div class="ct" style="color:#d4225c;letter-spacing:-0.303px">Becoming an Effective Online Inst...</div>
<div class="cs" style="letter-spacing:-0.227px">BEOI_SU2020-3_Tejada</div>
<div class="cterm" style="letter-spacing:-0.051px">Summer 2020</div>
<div class="ic" style="left:16px"><svg><use href="#i-ann"/></svg></div>
</div>
<div class="card" style="left:287px;top:384px">
<div class="hero" style="background:#b8704e">
<svg class="abs" style="left:0;top:0" width="175" height="97" viewBox="0 0 175 97">
<defs><filter id="b3" x="-5%" y="-5%" width="110%" height="110%"><feGaussianBlur stdDeviation=".75"/></filter><clipPath id="c3"><rect width="175" height="69.400"/></clipPath></defs>
<g clip-path="url(#c3)"><g filter="url(#b3)">
<rect x="-3" y="-3" width="181" height="76" fill="#a6b673"/>
<path d="M-3 -3h50v20L-3 30z" fill="#b5ac8c"/>
<path d="M0 34l46-18v54H0z" fill="#9cc07e"/><g stroke="#c6c86a" stroke-width="1.600"><path d="M12 70L46 22M20 70L50 30M4 62L40 18M28 70L56 36M0 50L34 16"/></g><g stroke="#c0c870" stroke-width="1.600"><path d="M92 8l16 40M98 4l16 40M104 2l14 36M86 12l14 40"/></g>

<path d="M60 -3h60v30H60z" fill="#a9b478"/>
<path d="M96 20l18-6v55H96z" fill="#9bb070"/>
<rect x="46.500" y="-3" width="8.500" height="42" fill="#7a88a4"/>
<rect x="113" y="-3" width="65" height="26" fill="#b5aaa8"/>
<rect x="150" y="-3" width="28" height="73" fill="#b0a09a"/>
<path d="M128 6h14l2 40h-16z" fill="#8a5898"/>
<ellipse cx="136" cy="8" rx="5" ry="6" fill="#9a6a5a"/>
<ellipse cx="146" cy="4" rx="5" ry="6" fill="#a87a60"/>
<path d="M0 26c4-3 10-3 13 2l-2 8H0z" fill="#c0784a"/><path d="M0 34h9v14H0z" fill="#a06a52"/><path d="M0 48h10l2 22H0z" fill="#6a98a8"/>
<path d="M50 70c0-20 4-34 14-40l12-6 12 6c10 6 12 20 12 40z" fill="#c83a86"/>
<ellipse cx="75.500" cy="18" rx="8.500" ry="11" fill="#a87060"/>
<path d="M66 14c1-10 18-10 20-1l-3 3c-4-4-10-4-14 0z" fill="#6a6062"/>
<circle cx="70" cy="52" r="21" fill="none" stroke="#c09460" stroke-width="4"/>
<circle cx="70" cy="54" r="17" fill="#c8a860"/>
<path d="M54 56a16 16 0 0 1 32 0z" fill="#d84a80"/><path d="M58 66c0-10 6-16 14-16s12 4 12 10z" fill="#58b070"/><path d="M62 70c0-8 4-12 10-12s8 4 8 12z" fill="#e8d048"/><path d="M66 70c0-5 2-8 6-8s6 3 6 8z" fill="#7a58c0"/>
<path d="M52 60h8v10h-8z" fill="#d84040"/>
<path d="M101 26c5-8 12-10 18-6l6 10-4 40h-22z" fill="#c0408a"/>
<circle cx="112" cy="24" r="5" fill="#d83878"/><circle cx="120" cy="36" r="5" fill="#3ab078"/><circle cx="108" cy="46" r="5" fill="#e03a80"/><circle cx="118" cy="56" r="5" fill="#c83aa0"/><circle cx="106" cy="62" r="4" fill="#38a868"/>
<path d="M133 70V48l8-8h16l8 10v20z" fill="#6a98b8"/>
<ellipse cx="152" cy="32" rx="8" ry="10" fill="#8a5848"/>
<path d="M143 28c0-10 18-10 18 0l-4-2h-10z" fill="#4a3a3a"/>
<path d="M128 44h6v26h-6z" fill="#a87a5a"/>
</g></g>
<rect x="0" y="0" width="175" height="69.400" fill="#9a8a70" opacity=".22"/><rect x="0" y="69.400" width="175" height="27.600" fill="#b8704e"/>
</svg>
<div class="abs" id="pu1" style="left:31.500px;top:74.600px;font-size:19px;line-height:1;font-weight:700;color:#3a1a20;-webkit-text-stroke:.5px #3a1a20;white-space:nowrap;transform-origin:0 0;transform:scaleX(.755);letter-spacing:.6px">DVC PUENTE</div>
</div>
<svg class="abs" style="left:152.600px;top:13.300px" width="5" height="15" viewBox="0 0 5 15" fill="#fff"><circle cx="2.400" cy="1.700" r="1.450"/><circle cx="2.400" cy="7.400" r="1.450"/><circle cx="2.400" cy="13" r="1.450"/></svg>
<div class="ct" style="color:#2d3b45;letter-spacing:-0.222px">6955 - Critcl Thnkng: Wrtng Abou...</div>
<div class="cs" style="letter-spacing:-0.034px">ENGL-123-6955</div>
<div class="cterm" style="letter-spacing:-0.042px">Spring 2022</div>
<div class="ic" style="left:16px"><svg><use href="#i-ann"/></svg></div>
<div class="badge" style="left:24.9px;top:140.200px;width:12.2px;padding:0">6</div>
</div>
<div class="card" style="left:485px;top:384px">
<div class="hero" style="background:#8f7f9d">
<div class="abs" style="left:0;top:0;width:175px;height:97px;background:linear-gradient(180deg,#2c4a92 0%,#3f5f9f 14%,#6484b8 30%,#a7a6c2 40%,#c3bcc4 52%,#c9bfbe 66%,#b98a9c 69.500%,#b4536f 72%,#b25270 84%,#a5476a 100%)"></div>
<div class="abs" style="left:-6px;top:2px;width:40px;height:34px;background:radial-gradient(ellipse at 50% 50%,rgba(150,165,205,.75),rgba(150,165,205,0) 70%)"></div>
<div class="abs" style="left:102px;top:12px;width:24px;height:14px;background:radial-gradient(ellipse at 50% 50%,rgba(200,195,200,.8),rgba(190,190,215,0) 70%)"></div>
<div class="abs" style="left:100px;top:4px;width:80px;height:34px;background:linear-gradient(160deg,rgba(150,165,210,0) 40%,rgba(150,165,210,.55) 52%,rgba(150,165,210,0) 64%)"></div>
<div class="abs" style="left:50px;top:72px;width:75px;height:25px;background:linear-gradient(90deg,rgba(205,130,150,0),rgba(205,130,150,.5) 50%,rgba(205,130,150,0))"></div>
<div class="abs" style="left:4px;top:33px;width:2.400px;height:27px;background:#5e5174"></div>
<div class="abs" id="ca1" style="left:11.500px;top:29.600px;font-family:'Liberation Serif',serif;font-size:21.400px;line-height:1;color:#6b5878;white-space:nowrap;transform-origin:0 0;transform:scaleX(.903)"><span id="ca1a">DVC Career &amp;</span><span style="letter-spacing:1.300px"> Tran</span></div>
<div class="abs" id="ca2" style="left:36px;top:52.500px;font-family:'Liberation Serif',serif;font-size:10.500px;line-height:1;color:#6c5c7c;white-space:nowrap;transform-origin:0 0;transform:scaleX(.803)">Explore Your Options, Find Your Fit!</div>
<div class="abs" style="left:11.500px;top:57px;width:22px;height:1px;background:#85789a"></div>
</div>
<svg class="abs" style="left:152.600px;top:13.300px" width="5" height="15" viewBox="0 0 5 15" fill="#fff"><circle cx="2.400" cy="1.700" r="1.450"/><circle cx="2.400" cy="7.400" r="1.450"/><circle cx="2.400" cy="13" r="1.450"/></svg>
<div class="ct" style="color:#2d3b45;letter-spacing:-0.214px">21-22 DVC Career &amp; Transfer Serv...</div>
<div class="cs" style="letter-spacing:-0.102px">21-22 DVC Career &amp; Transfer ...</div>
<div class="ic" style="left:16px"><svg><use href="#i-ann"/></svg></div>
<div class="badge" style="left:24.9px;top:140.200px;width:12.2px;padding:0">2</div>
</div>
<div class="card" style="left:684px;top:384px">
<div class="hero" style="background:#4da8d8">
<svg class="abs" style="left:0;top:0" width="175" height="97" viewBox="0 0 175 97">
<rect width="175" height="97" fill="#4da8d8"/>
<path d="M39.800 0h94.500v42H39.800z" fill="#2b8fc8"/>
<path d="M44 6.400h86v34.100H44z" fill="#0f70a0"/>
<path d="M40 2c14 6 32 6 44 0v5c-12 5-30 5-44 0zM134 2c-14 6-28 6-36 2v5c8 3 22 3 36-2z" fill="#2b8fc8"/>
<path d="M50 40c4-8 10-12 18-16 2-10 8-18 18-22l8-2 12 4c6 6 8 16 6 26l-4 8 2 6-8 2-6 6-14-2-18-4z" fill="#0d5f92"/>
<path d="M76 0c4 6 12 10 20 8l6-8z" fill="#0a527f"/>
<path d="M84 2c2 6 10 9 16 6" fill="none" stroke="#2b8fc8" stroke-width="2.500"/>
<path d="M100 16c4 0 8 4 8 10l-4 8-6-4z" fill="#2786bd"/>
<path d="M112 32l10-4 2 4-10 5z" fill="#2b8fc8"/>
<path d="M40.500 70.700h93.200c0 9-4 17-12 24l-3 2.300H55l-3-2.300c-8-7-11.500-15-11.500-24z" fill="#0f70a0"/>
<path d="M40.500 70.700h93.200c0 9-4 17-12 24l-3 2.300H55l-3-2.300c-8-7-11.500-15-11.500-24z" fill="none" stroke="#2b8fc8" stroke-width="2"/>
<g fill="#2b8fc8"><rect x="46" y="72.500" width="82" height="1.600"/><rect x="47" y="77" width="80" height="1.800"/><rect x="49" y="81.500" width="76" height="1.600"/></g>
<g fill="#2b8fc8"><circle cx="52" cy="86" r=".9"/><circle cx="58" cy="86" r=".9"/><circle cx="64" cy="86" r=".9"/><circle cx="70" cy="86" r=".9"/><circle cx="92" cy="86" r=".9"/><circle cx="98" cy="86" r=".9"/><circle cx="104" cy="86" r=".9"/><circle cx="110" cy="86" r=".9"/><circle cx="116" cy="86" r=".9"/><circle cx="61" cy="91" r=".9"/><circle cx="67" cy="91" r=".9"/><circle cx="73" cy="91" r=".9"/><circle cx="95" cy="91" r=".9"/><circle cx="101" cy="91" r=".9"/><circle cx="107" cy="91" r=".9"/><circle cx="113" cy="91" r=".9"/></g>
<path d="M76 72c2 8 4 14 10 25h12c-8-8-11-16-11-25z" fill="#2b8fc8"/>
</svg>
<div class="abs" id="ve1" style="left:41.200px;top:41.400px;width:200px;font-size:29.300px;line-height:1;font-weight:700;color:#0f70a0;-webkit-text-stroke:2.200px #0f70a0;transform:scaleX(.575);transform-origin:0 0;white-space:nowrap">VETERANS</div>
</div>
<svg class="abs" style="left:152.600px;top:13.300px" width="5" height="15" viewBox="0 0 5 15" fill="#fff"><circle cx="2.400" cy="1.700" r="1.450"/><circle cx="2.400" cy="7.400" r="1.450"/><circle cx="2.400" cy="13" r="1.450"/></svg>
<div class="ct" style="color:#0b6ea6;letter-spacing:-0.348px">DVC Veteran Services</div>
<div class="cs" style="letter-spacing:-0.231px">DVC Veteran Services</div>
<div class="ic" style="left:16px"><svg><use href="#i-ann"/></svg></div>
<div class="badge" style="left:20.9px;top:140.200px;width:15.7px;padding:0">17</div>
</div>
<div class="card" style="left:883px;top:384px">
<div class="hero" style="background:#0a64b0">
<svg class="abs" style="left:0;top:0" width="175" height="97" viewBox="0 0 175 97">
<rect width="175" height="97" fill="#0a64b0"/>
<circle cx="86.800" cy="48.800" r="65" fill="none" stroke="#46a0e0" stroke-width="3.600" stroke-dasharray="3.600 3.200"/>
<circle cx="86.800" cy="48.800" r="54.600" fill="none" stroke="#58b0e8" stroke-width="11.600"/>
<circle cx="86.800" cy="48.800" r="38.400" fill="none" stroke="#58b0e8" stroke-width="5.500"/>
<circle cx="86.800" cy="26" r="7" fill="#58b0e8"/>
<path d="M63 37.600c0-1.700 1.200-2.900 3-2.800 7 .7 14 1.100 20.800 1.100s13.800-.4 20.800-1.100c1.800-.1 3 1.100 3 2.800s-1.100 2.800-2.700 3l-13.400 1.600.6 14 5.400 18.800c.5 1.700-.4 3.100-2 3.600s-3-.4-3.600-2L88.200 58h-2.800L78.700 76.600c-.6 1.600-2 2.500-3.600 2s-2.500-1.900-2-3.600L78.500 56.200l.6-14L65.700 40.600C64.100 40.400 63 39.300 63 37.600z" fill="#58b0e8"/>
<g fill="#2f86cc" font-family="Liberation Sans" font-size="7" font-weight="700"><text x="6" y="38" transform="rotate(-70 10 36)">DVC O</text><text x="150" y="14" transform="rotate(55 152 12)">SSIB</text></g>
</svg>
</div>
<svg class="abs" style="left:152.600px;top:13.300px" width="5" height="15" viewBox="0 0 5 15" fill="#fff"><circle cx="2.400" cy="1.700" r="1.450"/><circle cx="2.400" cy="7.400" r="1.450"/><circle cx="2.400" cy="13" r="1.450"/></svg>
<div class="ct" style="color:#0b6ea6;letter-spacing:-0.318px">Online Accessibility at DVC</div>
<div class="cs" style="letter-spacing:-0.071px">Online Accessibility at DVC</div>
</div>
<div class="card" style="left:88px;top:627px">
<div class="hero" style="background:#f0044f"></div>
<div class="pub">Publish</div>
<svg class="abs" style="left:152.600px;top:13.300px" width="5" height="15" viewBox="0 0 5 15" fill="#fff"><circle cx="2.400" cy="1.700" r="1.450"/><circle cx="2.400" cy="7.400" r="1.450"/><circle cx="2.400" cy="13" r="1.450"/></svg>
<div class="ct" style="color:#d4225c;letter-spacing:-0.243px">TRAINING COURSE - bgonzalez099</div>
<div class="cs" style="letter-spacing:-0.161px">TRAINING-bgonzalez099</div>
<div class="ic" style="left:16px"><svg><use href="#i-dis"/></svg></div>
<div class="ic" style="left:59px"><svg><use href="#i-fol"/></svg></div>
</div>
<div class="card" style="left:287px;top:627px">
<div class="hero" style="background:#0770bf"></div>
<div class="pub">Publish</div>
<svg class="abs" style="left:152.600px;top:13.300px" width="5" height="15" viewBox="0 0 5 15" fill="#fff"><circle cx="2.400" cy="1.700" r="1.450"/><circle cx="2.400" cy="7.400" r="1.450"/><circle cx="2.400" cy="13" r="1.450"/></svg>
<div class="ct" style="color:#0b6ea6;letter-spacing:-0.259px">7120 - Educational Planning</div>
<div class="cs" style="letter-spacing:0.048px">COUNS-095-7120</div>
<div class="cterm" style="letter-spacing:-0.042px">Spring 2022</div>
<div class="ic" style="left:16px"><svg><use href="#i-ann"/></svg></div>
<div class="badge" style="left:24.9px;top:140.200px;width:12.2px;padding:0">1</div>
</div>
<div class="card" style="left:485px;top:627px">
<div class="hero" style="background:#355239"></div>
<div class="pub">Publish</div>
<svg class="abs" style="left:152.600px;top:13.300px" width="5" height="15" viewBox="0 0 5 15" fill="#fff"><circle cx="2.400" cy="1.700" r="1.450"/><circle cx="2.400" cy="7.400" r="1.450"/><circle cx="2.400" cy="13" r="1.450"/></svg>
<div class="ct" style="color:#2f4433;letter-spacing:-0.259px">7148 - Educational Planning</div>
<div class="cs" style="letter-spacing:0.048px">COUNS-095-7148</div>
<div class="cterm" style="letter-spacing:-0.042px">Spring 2022</div>
<div class="ic" style="left:16px"><svg><use href="#i-ann"/></svg></div>
<div class="badge" style="left:24.9px;top:140.200px;width:12.2px;padding:0">1</div>
</div>
<div class="card" style="left:684px;top:627px">
<div class="hero" style="background:#a66b00"></div>
<div class="pub">Publish</div>
<svg class="abs" style="left:152.600px;top:13.300px" width="5" height="15" viewBox="0 0 5 15" fill="#fff"><circle cx="2.400" cy="1.700" r="1.450"/><circle cx="2.400" cy="7.400" r="1.450"/><circle cx="2.400" cy="13" r="1.450"/></svg>
<div class="ct" style="color:#9a6a08;letter-spacing:-0.240px">7180 - Educational Planning</div>
<div class="cs" style="letter-spacing:0.048px">COUNS-095-7180</div>
<div class="cterm" style="letter-spacing:-0.042px">Spring 2022</div>
<div class="ic" style="left:16px"><svg><use href="#i-dis"/></svg></div>
</div>
<div class="card" style="left:883px;top:627px">
<div class="hero" style="background:#0a8f14"></div>
<div class="pub">Publish</div>
<svg class="abs" style="left:152.600px;top:13.300px" width="5" height="15" viewBox="0 0 5 15" fill="#fff"><circle cx="2.400" cy="1.700" r="1.450"/><circle cx="2.400" cy="7.400" r="1.450"/><circle cx="2.400" cy="13" r="1.450"/></svg>
<div class="ct" style="color:#0f7d19;letter-spacing:-0.186px">DVC Master Shell COUNS 95</div>
<div class="cs" style="letter-spacing:-0.158px">DVC Master Shell COUNS 95</div>
<div class="ic" style="left:16px"><svg><use href="#i-ann"/></svg></div>
</div>
<style>
.rh{position:absolute;left:1264px;font-size:11.300px;font-weight:700;color:#2d3b45;white-space:nowrap;letter-spacing:-.2px;transform:scaleX(.893);transform-origin:0 50%}
.tl{transform:translateY(.6px);position:absolute;left:1290.500px;font-size:9.600px;line-height:12.500px;color:#0e6f9e;white-space:nowrap;letter-spacing:-.2px}
.tm{transform:translateY(.8px);position:absolute;left:1290.500px;font-size:8px;line-height:12px;color:#6b7780;white-space:nowrap;letter-spacing:0;word-spacing:.65px}
.tb{transform:translateY(-.4px);position:absolute;height:11px;border-radius:6px;background:#0770a3;color:#fff;font-size:7px;line-height:11px;text-align:center}
.tx{position:absolute;left:1416.500px;width:6px;height:6px}
.tx svg{width:6px;height:6px;stroke:#5a6872;stroke-width:.9;fill:none}
</style>
<div class="abs" style="left:1217.700px;top:94.500px;width:3px"><i style="display:block;width:2.600px;height:2.600px;border-radius:50%;background:#2d3b45;margin-bottom:1.700px"></i><i style="display:block;width:2.600px;height:2.600px;border-radius:50%;background:#2d3b45;margin-bottom:1.700px"></i><i style="display:block;width:2.600px;height:2.600px;border-radius:50%;background:#2d3b45"></i></div>
<div class="rh" style="top:106px">To Do</div>
<div class="hr" style="left:1264px;top:124px;width:160px"></div>
<div class="tb" style="left:1266px;top:135.500px;width:17px">24</div>
<div class="tl" style="top:132.300px">Grade Midterm Exam on<br>America: The Life and<br>Times of America Chavez</div>
<div class="tm" style="top:171px">ENGL-123-6955<br>50 points • Mar 19 at 11:59pm</div>
<div class="tx" style="top:134px"><svg viewBox="0 0 6 6"><path d="M.3.3l5.400 5.400M5.700.3L.3 5.700"/></svg></div>
<div class="tb" style="left:1270px;top:212.500px;width:12px">5</div>
<div class="tl" style="top:209.500px">Grade Wk 9 In-Class<br>Activities &amp; TQE Notes</div>
<div class="tm" style="top:236.300px">ENGL-123-6955<br>8 points • Mar 21 at 9:35am</div>
<div class="tx" style="top:211px"><svg viewBox="0 0 6 6"><path d="M.3.3l5.400 5.400M5.700.3L.3 5.700"/></svg></div>
<div class="tb" style="left:1270px;top:277.500px;width:12px">3</div>
<div class="tl" style="top:275.300px">Grade WP#2: Brainstorm<br>Activity</div>
<div class="tm" style="top:301.300px">ENGL-123-6955<br>5 points • Apr 2 at 11:59pm</div>
<div class="tx" style="top:276.500px"><svg viewBox="0 0 6 6"><path d="M.3.3l5.400 5.400M5.700.3L.3 5.700"/></svg></div>
<div class="rh" style="top:347px">Coming Up</div>
<svg class="abs" style="left:1358.500px;top:345.500px" width="10" height="10" viewBox="0 0 10 10" fill="none" stroke="#5a6872" stroke-width=".9"><path d="M.6 1.500h8.800v8H.6zM.6 3.300h8.800M2.800 .3v2M7.200 .3v2"/><path d="M4 5h2v3H4" stroke-width=".7"/></svg>
<div class="abs" style="left:1373px;top:346px;font-size:8.400px;color:#0e6f9e;white-space:nowrap;letter-spacing:-.15px">View Calendar</div>
<div class="hr" style="left:1264px;top:365px;width:160px"></div>
<div class="abs" style="left:1264px;top:372.500px;width:11px;height:11px;color:#6b7780"><svg style="width:11px;height:11px;fill:none;stroke:currentColor;stroke-width:1;stroke-linejoin:round"><use href="#i-dis"/></svg></div>
<div class="tl" style="left:1283px;top:373.500px;letter-spacing:-.04px">WP#2: Brainstorm Activity</div>
<div class="tm" style="left:1283px;top:387.300px;line-height:10.500px">ENGL-123-6955<br>5 points • Apr 2 at 11:59pm</div>
<div class="rh" style="top:430px">Recent Feedback</div>
<div class="hr" style="left:1264px;top:448px;width:160px"></div>
<div class="abs" style="left:1264px;top:451px;font-size:8.800px;color:#2d3b45;white-space:nowrap;letter-spacing:.08px">Nothing for now</div>
<div class="abs" style="left:1264px;top:474px;width:160px;height:26px;background:#f5f5f5;border:1px solid #c7cdd1;border-radius:2px"></div>
<div class="abs" style="left:1274px;top:482px;font-size:10.700px;color:#2d3b45;white-space:nowrap;letter-spacing:-.15px">View Grades</div>
</div>
</body>
</html>
